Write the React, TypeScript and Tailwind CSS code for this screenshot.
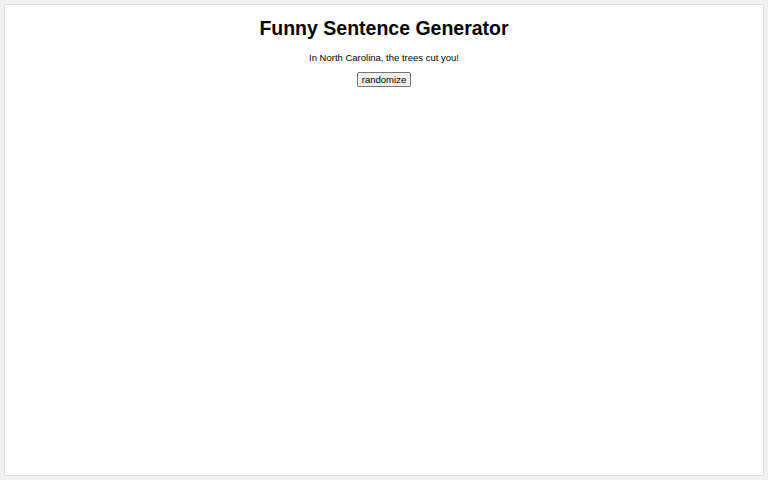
import { useState } from 'react';

const sentences = [
  'In North Carolina, the trees cut you!',
  'In Ohio, the fish walk you!',
  'In Texas, the cows milk you!',
];

export default function App() {
  const [i, setI] = useState(0);

  return (
    <div className="h-[480px] w-[768px] bg-[#f2f2f2] p-[4px] font-['Liberation_Sans',Arial,sans-serif] text-black">
      <div className="flex h-full flex-col items-center border border-[#dcdcdc] bg-white">
        <h1 className="mt-[12px] text-[19.5px] font-bold leading-[22px]">Funny Sentence Generator</h1>
        <p className="mt-[13px] text-[9.5px] leading-[11px]">{sentences[i]}</p>
        <button
          type="button"
          onClick={() => setI((i + 1) % sentences.length)}
          className="mt-[9px] h-[15px] rounded-[2px] border border-[#767676] bg-[#efefef] px-[4px] text-[9.5px] leading-[12px]"
        >
          randomize
        </button>
      </div>
    </div>
  );
}
